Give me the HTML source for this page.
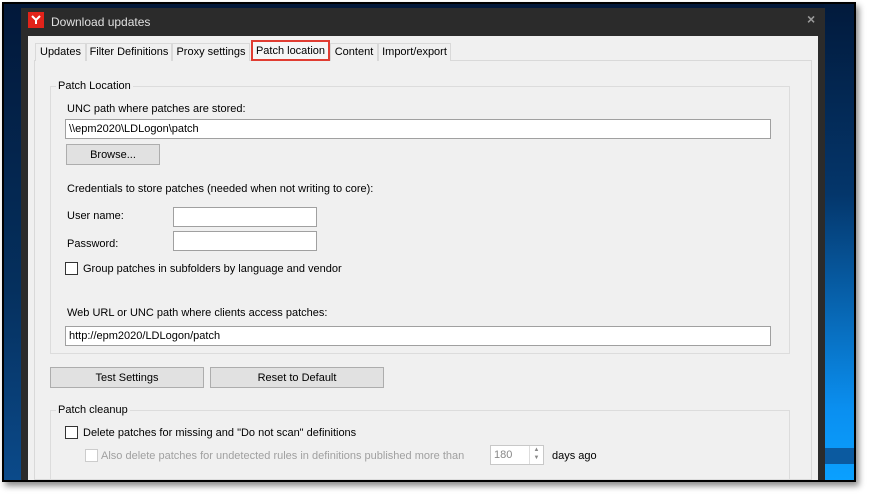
<!DOCTYPE html>
<html><head><style>
*{margin:0;padding:0;box-sizing:border-box}
body{width:871px;height:499px;background:#fff;position:relative;overflow:hidden;font-family:"Liberation Sans",sans-serif;font-size:11px;color:#000}
.a{position:absolute}
.frame{left:2px;top:2px;width:854px;height:480px;border:2px solid #000;background:linear-gradient(180deg,#02183a 0%,#05305e 60%,#0b4a8a 100%);box-shadow:3px 4px 6px rgba(0,0,0,.45)}
.rb{left:824px;top:4px;width:30px;height:476px;background:linear-gradient(180deg,#021a3c 0%,#04366b 40%,#0a8ff0 85%,#0aa0ff 100%)}
.dlg{left:21px;top:8px;width:804px;height:472px;background:#2b2b2b}
.title{left:21px;top:8px;width:804px;height:28px;background:#2b2b2b;color:#e0e0e0;font-size:12px}
.body{left:28px;top:36px;width:790px;height:444px;background:#f0f0f0}
.tab{top:43px;height:18px;border:1px solid #d9d9d9;border-bottom:none;background:#f0f0f0;font-size:11px;line-height:17px;text-align:center}
.page{left:34px;top:60px;width:778px;height:420px;border:1px solid #d9d9d9;background:#f0f0f0}
.grp{border:1px solid #dcdcdc}
.lbl{font-size:11px;white-space:nowrap;margin-top:1px}
.in{background:#fff;border:1px solid #a0a0a0;height:20px;padding-left:3px;line-height:19px}
.btn{background:#e1e1e1;border:1px solid #adadad;text-align:center;line-height:21px;height:21px}
.cb{width:13px;height:13px;border:1px solid #333;background:#fff}
</style></head><body>
<div class="a frame"></div>
<div class="a rb"></div>
<div class="a" style="left:824px;top:448px;width:30px;height:16px;background:#0b5aa0"></div>
<div class="a dlg"></div>
<div class="a title">
  <div class="a" style="left:7px;top:4px;width:16px;height:16px;background:#e2231a"></div>
  <svg class="a" style="left:7px;top:4px" width="16" height="16"><path d="M4 4L8 8L12 4M8 8V12" stroke="#fff" stroke-width="2" fill="none"/></svg>
  <div class="a" style="left:30px;top:7px">Download updates</div>
  <div class="a" style="left:786px;top:3px;color:#9a9a9a;font-size:14px;font-weight:bold">×</div>
</div>
<div class="a body"></div>
<div class="a page"></div>
<div class="a tab" style="left:35px;width:51px">Updates</div>
<div class="a tab" style="left:86px;width:86px">Filter Definitions</div>
<div class="a tab" style="left:172px;width:78px">Proxy settings</div>
<div class="a tab" style="left:251px;top:40px;height:21px;width:79px;border:2px solid #e03c31;background:#f6f6f6;line-height:18px">Patch location</div>
<div class="a tab" style="left:330px;width:48px">Content</div>
<div class="a tab" style="left:378px;width:73px">Import/export</div>

<div class="a grp" style="left:50px;top:86px;width:740px;height:268px"></div>
<div class="a lbl" style="left:56px;top:79px;background:#f0f0f0;padding:0 2px">Patch Location</div>
<div class="a lbl" style="left:67px;top:102px">UNC path where patches are stored:</div>
<div class="a in" style="left:65px;top:119px;width:706px">\\epm2020\LDLogon\patch</div>
<div class="a btn" style="left:66px;top:144px;width:94px">Browse...</div>
<div class="a lbl" style="left:67px;top:182px">Credentials to store patches (needed when not writing to core):</div>
<div class="a lbl" style="left:67px;top:209px">User name:</div>
<div class="a in" style="left:173px;top:207px;width:144px"></div>
<div class="a lbl" style="left:67px;top:237px">Password:</div>
<div class="a in" style="left:173px;top:231px;width:144px"></div>
<div class="a cb" style="left:65px;top:262px"></div>
<div class="a lbl" style="left:83px;top:262px">Group patches in subfolders by language and vendor</div>
<div class="a lbl" style="left:67px;top:306px">Web URL or UNC path where clients access patches:</div>
<div class="a in" style="left:65px;top:326px;width:706px">http://epm2020/LDLogon/patch</div>

<div class="a btn" style="left:50px;top:367px;width:154px">Test Settings</div>
<div class="a btn" style="left:210px;top:367px;width:174px">Reset to Default</div>

<div class="a grp" style="left:50px;top:410px;width:740px;height:70px"></div>
<div class="a lbl" style="left:56px;top:403px;background:#f0f0f0;padding:0 2px">Patch cleanup</div>
<div class="a cb" style="left:65px;top:426px"></div>
<div class="a lbl" style="left:83px;top:426px">Delete patches for missing and "Do not scan" definitions</div>
<div class="a cb" style="left:85px;top:449px;border-color:#ccc"></div>
<div class="a lbl" style="left:101px;top:449px;color:#a0a0a0">Also delete patches for undetected rules in definitions published more than</div>
<div class="a in" style="left:490px;top:445px;width:54px;color:#888;border-color:#c8c8c8">180</div>
<div class="a" style="left:529px;top:446px;width:14px;height:18px;border-left:1px solid #ddd;font-size:6px;color:#888;text-align:center;line-height:8px">▲<br>▼</div>
<div class="a lbl" style="left:552px;top:449px">days ago</div>
</body></html>
